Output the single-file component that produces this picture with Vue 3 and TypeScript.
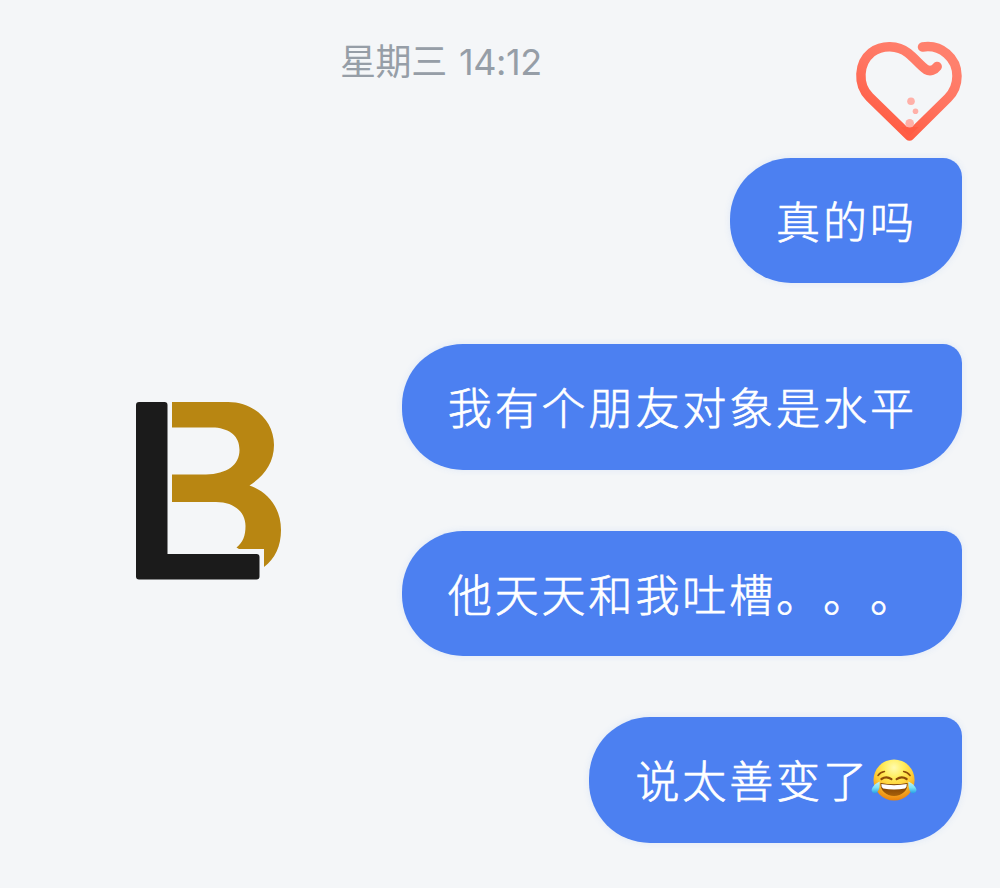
<script setup lang="ts">
interface Message {
  id: number
  text: string
  laughing?: boolean
}

const timestamp = '星期三 14:12'

const messages: Message[] = [
  { id: 1, text: '真的吗' },
  { id: 2, text: '我有个朋友对象是水平' },
  { id: 3, text: '他天天和我吐槽。。。' },
  { id: 4, text: '说太善变了', laughing: true },
]
</script>

<template>
  <main class="chat">
    <header class="top">
      <time class="time">{{ timestamp }}</time>
      <svg class="heart" viewBox="840 25 140 130" aria-hidden="true">
        <defs>
          <linearGradient id="heart-ink" gradientUnits="userSpaceOnUse" x1="937" y1="55" x2="894" y2="133">
            <stop offset="0" stop-color="#ff806d" />
            <stop offset="0.45" stop-color="#ff7561" />
            <stop offset="1" stop-color="#ff5c43" />
          </linearGradient>
        </defs>
        <path
          class="heart-line"
          d="M922.5 47C941 44 957 58 957 76C957 85 954 92 948 98L909.5 136L869.500 97C857 84.500 858.500 63 871.500 52.500C882 44.500 898 45 908 53C915 58.500 920.500 65.500 926 69.500C930.500 72 934.500 70 937.200 66.500"
        />
        <path class="heart-tip" d="M900.500 127H918.500L909.500 136Z" />
        <g class="heart-dots">
          <circle cx="911" cy="101.300" r="3.800" />
          <circle cx="915.500" cy="111.300" r="2.800" />
          <circle cx="909.700" cy="123.200" r="4.300" />
        </g>
      </svg>
    </header>

    <section class="body">
      <svg class="logo" viewBox="136 401 146 179" role="img" aria-label="LB">
        <path
          class="logo-b"
          d="M172 402H228C254 402 274 421 274 445C274 463 264 476 249.500 485.500C268 492 281 508 281 530C281 546 275 559 264 567V549H239L236.500 547.500C243 542 245.500 536 245.500 526C245.500 512 234 502 216 502H172V474.500H206C227 474 239.500 465 239.500 450C239.500 436 230 429 215 427.500H172Z"
        />
        <path
          class="logo-l"
          d="M139 402H164.500Q167.500 402 167.500 405V554H256.500Q259.500 554 259.500 557V576.500Q259.500 579.500 256.500 579.500H139Q136 579.500 136 576.500V405Q136 402 139 402Z"
        />
      </svg>

      <div class="messages">
        <div v-for="message in messages" :key="message.id" class="bubble">
          <span>{{ message.text }}</span>
          <svg v-if="message.laughing" class="emoji" viewBox="-1.500 0 47 46" role="img" aria-label="😂">
            <defs>
              <radialGradient id="face" cx="0.5" cy="0.2" r="0.82">
                <stop offset="0" stop-color="#fffbb0" />
                <stop offset="0.3" stop-color="#ffee5c" />
                <stop offset="0.6" stop-color="#ffc931" />
                <stop offset="1" stop-color="#e87d0c" />
              </radialGradient>
              <linearGradient id="tear" x1="0" y1="0" x2="0" y2="1">
                <stop offset="0" stop-color="#c5f4fb" />
                <stop offset="0.5" stop-color="#7de1f5" />
                <stop offset="1" stop-color="#229fe5" />
              </linearGradient>
              <linearGradient id="mouth" x1="0" y1="0" x2="0" y2="1">
                <stop offset="0" stop-color="#6e3503" />
                <stop offset="1" stop-color="#a96209" />
              </linearGradient>
            </defs>
            <circle cx="22.600" cy="24" r="20.600" fill="url(#face)" />
            <path class="brow" d="M6.500 19.500Q9 16 13 15.500M32.200 15.500Q36 16 38.700 19.500" />
            <path class="eye" d="M10 23Q15 19.500 20 23.200M25.200 23.200Q30.200 19.500 35.200 23" />
            <path fill="url(#mouth)" d="M9 27Q22.600 29.500 36.200 27C36.500 34.500 30.500 40 22.600 40S8.700 34.500 9 27Z" />
            <path class="teeth" d="M9.800 28Q22.600 30.300 35.400 28Q35.600 31.500 33.500 32.500Q22.600 34.500 11.700 32.500Q9.600 31.500 9.800 28Z" />
            <path fill="url(#tear)" d="M8.200 25.500Q2.500 28 .3 33Q-.5 36.500 3 37.500Q8.500 37 8.200 25.500Z" />
            <path fill="url(#tear)" d="M37 25.500Q42.700 28 44.900 33Q45.700 36.500 42.200 37.500Q36.700 37 37 25.500Z" />
          </svg>
        </div>
      </div>
    </section>
  </main>
</template>

<style scoped>
.chat {
  box-sizing: border-box;
  width: 1000px;
  height: 888px;
  padding: 25px 20px 0 136px;
  overflow: hidden;
  background: #f4f6f8;
}

.top {
  display: flex;
  justify-content: space-between;
  height: 132.5px;
}

.time {
  margin: 11px 0 0 204px;
  color: #969ea7;
  font-family: Inter, "Noto Sans CJK SC", sans-serif;
  font-feature-settings: "calt" 0;
  font-size: 36px;
  letter-spacing: -0.4px;
  word-spacing: 2.5px;
  line-height: 52px;
  white-space: nowrap;
}

.heart {
  width: 140px;
  height: 130px;
}

.heart-line {
  fill: none;
  stroke: url(#heart-ink);
  stroke-width: 9.5;
  stroke-linecap: round;
  stroke-linejoin: round;
}

.heart-tip {
  fill: #ff5c43;
}

.heart-dots {
  fill: #ffb0a8;
}

.body {
  display: flex;
  justify-content: space-between;
  padding-right: 18px;
}

.logo {
  width: 146px;
  height: 179px;
  margin-top: 243.5px;
}

.logo-b {
  fill: #b88612;
}

.logo-l {
  fill: #1b1b1b;
}

.messages {
  display: flex;
  flex-direction: column;
  align-items: flex-end;
  gap: 61px;
}

.bubble {
  box-sizing: border-box;
  display: flex;
  align-items: center;
  height: 125.5px;
  padding: 0 45.2px 1px 46.2px;
  border-radius: 61px 19px 61px 61px;
  background: #4c80f1;
  box-shadow: 0 0 7px rgba(76, 128, 241, 0.12);
  color: #fff;
  font-family: "Noto Sans CJK SC", sans-serif;
  font-size: 44px;
  font-weight: 300;
  letter-spacing: 2.9px;
  line-height: 66px;
  text-spacing-trim: space-all;
  white-space: nowrap;
  -webkit-text-stroke: 0.7px #fff;
}

.emoji {
  width: 46.9px;
  height: 46px;
}

.brow,
.eye {
  fill: none;
  stroke: #8d4d08;
  stroke-linecap: round;
}

.brow {
  stroke-width: 1.5;
}

.eye {
  stroke-width: 2.2;
}

.teeth {
  fill: #fff;
}
</style>

<style>
body {
  margin: 0;
  background: #f4f6f8;
}
</style>
